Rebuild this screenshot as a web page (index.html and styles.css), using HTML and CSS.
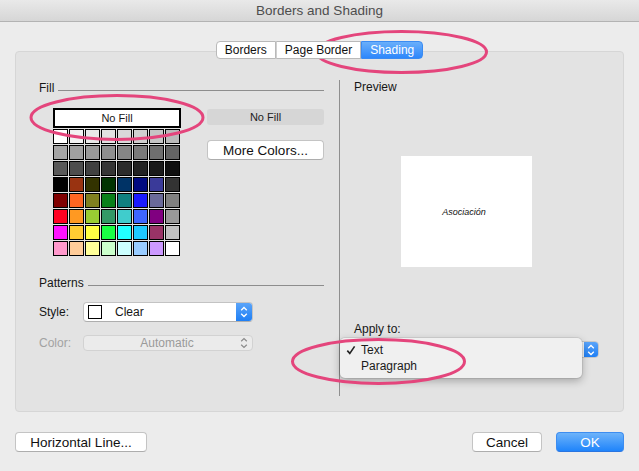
FILE: index.html
```html
<!DOCTYPE html>
<html lang="en">
<head>
    <meta charset="UTF-8">
    <title>Borders and Shading</title>
    <link rel="stylesheet" href="styles.css">
</head>
<body>
    <div class="titlebar">Borders and Shading</div>

    <div class="tabs">
        <span class="tab">Borders</span><span class="tab">Page Border</span><span class="tab active">Shading</span>
    </div>

    <div class="panel">
        <div class="left">
            <div class="group-title"><span>Fill</span><i class="rule"></i></div>

            <div class="fill">
                <div class="palette">
                    <div class="no-fill">No Fill</div>
                    <div class="swatches">
                        <span style="background:#ffffff"></span><span style="background:#f2f2f2"></span><span style="background:#e8e8e8"></span><span style="background:#e1e1e1"></span><span style="background:#d9d9d9"></span><span style="background:#cfcfcf"></span><span style="background:#c5c5c5"></span><span style="background:#bababa"></span>
                        <span style="background:#a5a5a5"></span><span style="background:#a0a0a0"></span><span style="background:#9a9a9a"></span><span style="background:#8f8f8f"></span><span style="background:#858585"></span><span style="background:#7a7a7a"></span><span style="background:#6f6f6f"></span><span style="background:#646464"></span>
                        <span style="background:#595959"></span><span style="background:#4d4d4d"></span><span style="background:#404040"></span><span style="background:#353535"></span><span style="background:#2b2b2b"></span><span style="background:#222222"></span><span style="background:#1a1a1a"></span><span style="background:#0f0f0f"></span>
                        <span style="background:#000000"></span><span style="background:#993311"></span><span style="background:#333300"></span><span style="background:#003300"></span><span style="background:#003366"></span><span style="background:#000a80"></span><span style="background:#3a3a99"></span><span style="background:#333333"></span>
                        <span style="background:#800000"></span><span style="background:#ff6622"></span><span style="background:#808020"></span><span style="background:#0a801a"></span><span style="background:#108080"></span><span style="background:#1a1aff"></span><span style="background:#6a6a99"></span><span style="background:#808080"></span>
                        <span style="background:#ff0022"></span><span style="background:#ff9922"></span><span style="background:#99cc33"></span><span style="background:#339966"></span><span style="background:#40cccc"></span><span style="background:#3d66ff"></span><span style="background:#800080"></span><span style="background:#999999"></span>
                        <span style="background:#ff11ff"></span><span style="background:#ffcc33"></span><span style="background:#ffff44"></span><span style="background:#1aff44"></span><span style="background:#22ffff"></span><span style="background:#1ec8ff"></span><span style="background:#993366"></span><span style="background:#c0c0c0"></span>
                        <span style="background:#ff99cc"></span><span style="background:#ffcc99"></span><span style="background:#ffff99"></span><span style="background:#ccffcc"></span><span style="background:#ccffff"></span><span style="background:#99ccff"></span><span style="background:#cc99ff"></span><span style="background:#ffffff"></span>
                    </div>
                </div>

                <div class="fill-side">
                    <div class="current">No Fill</div>
                    <button class="btn more">More Colors...</button>
                </div>
            </div>

            <div class="group-title patterns"><span>Patterns</span><i class="rule"></i></div>

            <div class="field">
                <label>Style:</label>
                <div class="popup">
                    <span class="pattern-box"></span>
                    <span class="popup-text">Clear</span>
                    <span class="stepper">
                        <svg width="8" height="12" viewBox="0 0 8 12"><path d="M1.2 4.2 L4 1.5 L6.8 4.2 M1.2 7.8 L4 10.5 L6.8 7.8" fill="none" stroke="#fff" stroke-width="1.3"/></svg>
                    </span>
                </div>
            </div>

            <div class="field disabled">
                <label>Color:</label>
                <div class="popup small">
                    <span class="popup-text">Automatic</span>
                    <span class="arrows">
                        <svg width="8" height="12" viewBox="0 0 8 12"><path d="M1.2 4.2 L4 1.5 L6.8 4.2 M1.2 7.8 L4 10.5 L6.8 7.8" fill="none" stroke="#8a8a8a" stroke-width="1.2"/></svg>
                    </span>
                </div>
            </div>
        </div>

        <div class="right">
            <div class="label">Preview</div>
            <div class="preview"><em>Asociación</em></div>

            <div class="label apply-label">Apply to:</div>
            <div class="apply">
                <span class="stepper">
                    <svg width="8" height="12" viewBox="0 0 8 12"><path d="M1.2 4.2 L4 1.5 L6.8 4.2 M1.2 7.8 L4 10.5 L6.8 7.8" fill="none" stroke="#fff" stroke-width="1.3"/></svg>
                </span>
                <div class="menu">
                    <div class="menu-item">
                        <span class="check"><svg width="10" height="10" viewBox="0 0 10 10"><path d="M1.3 5.6 L3.8 8.4 L8.6 1.4" fill="none" stroke="#222" stroke-width="1.6"/></svg></span>
                        Text
                    </div>
                    <div class="menu-item"><span class="check"></span>Paragraph</div>
                </div>
            </div>
        </div>
    </div>

    <div class="footer">
        <button class="btn hline">Horizontal Line...</button>
        <button class="btn cancel">Cancel</button>
        <button class="btn ok">OK</button>
    </div>

    <!-- hand-drawn highlight marks over the screenshot -->
    <svg class="marks" width="639" height="471" viewBox="0 0 639 471">
        <ellipse cx="401.5" cy="52" rx="85" ry="20.5"/>
        <ellipse cx="117" cy="117.5" rx="86" ry="22"/>
        <ellipse cx="378.5" cy="361.5" rx="86" ry="22"/>
    </svg>
</body>
</html>
```

FILE: styles.css
```css
* {
    margin: 0;
    padding: 0;
    box-sizing: border-box;
}

body {
    font-family: "Liberation Sans", Arial, sans-serif;
    font-size: 12px;
    color: #161616;
    background: #ececec;
    width: 639px;
    height: 471px;
    overflow: hidden;
    position: relative;
}

.titlebar {
    height: 22px;
    line-height: 21px;
    text-align: center;
    font-size: 13.5px;
    color: #4d4d4d;
    background: linear-gradient(#e9e9e9, #d6d6d6);
    border-bottom: 1px solid #b3b3b3;
}

.tabs {
    display: flex;
    justify-content: center;
    margin-top: 19px;
    position: relative;
    z-index: 1;
}

.tab {
    height: 18px;
    line-height: 16px;
    padding: 0 8px;
    background: #ffffff;
    color: #111111;
    border: 1px solid #b9b9b9;
    border-left: 1px solid #d0d0d0;
}

.tab:first-child {
    border-left-color: #b9b9b9;
    border-radius: 4px 0 0 4px;
}

.tab:last-child {
    border-radius: 0 4px 4px 0;
}

.tab.active {
    background: linear-gradient(#6aaffa, #2d87fb);
    border-color: #3a8bf2;
    color: #ffffff;
}

.panel {
    display: flex;
    height: 361px;
    margin: -8px 15px 0;
    background: #e3e3e3;
    border: 1px solid #d6d6d6;
    border-radius: 4px;
}

.left {
    width: 323px;
    padding: 28px 15px 0 23px;
}

.group-title {
    display: flex;
    align-items: center;
    height: 16px;
    line-height: 16px;
}

.rule {
    flex: 1;
    height: 1px;
    background: #8d8d8d;
    margin: 4px 0 0 4px;
}

.fill {
    display: flex;
    margin-top: 12px;
    padding-left: 14px;
}

.palette {
    width: 128px;
}

.no-fill {
    height: 20px;
    line-height: 16px;
    border: 2px solid #000000;
    background: #ffffff;
    text-align: center;
    font-size: 11px;
    margin-bottom: 1px;
}

.swatches {
    display: grid;
    grid-template-columns: repeat(8, 15px);
    grid-auto-rows: 15px;
    gap: 1px;
}

.swatches span {
    border: 1px solid #000000;
}

.fill-side {
    width: 117px;
    margin-left: 26px;
    padding-top: 1px;
}

.current {
    height: 16px;
    line-height: 16px;
    background: #d6d6d6;
    border-radius: 3px;
    text-align: center;
    font-size: 11px;
    color: #222222;
}

.btn {
    height: 20px;
    padding: 0 10px;
    font-family: inherit;
    font-size: 13.5px;
    color: #111111;
    background: #ffffff;
    border: 1px solid #c4c4c4;
    border-bottom-color: #adadad;
    border-radius: 4px;
}

.more {
    display: block;
    width: 100%;
    margin-top: 15px;
}

.patterns {
    margin-top: 19px;
}

.field {
    display: flex;
    align-items: center;
    margin-top: 11px;
}

.field label {
    width: 44px;
}

.popup {
    display: flex;
    align-items: center;
    width: 170px;
    height: 20px;
    background: #ffffff;
    border: 1px solid #c3c3c3;
    border-bottom-color: #aeaeae;
    border-radius: 4px;
    overflow: hidden;
}

.pattern-box {
    width: 14px;
    height: 14px;
    border: 1px solid #000000;
    margin-left: 4px;
}

.popup-text {
    margin-left: 13px;
}

.stepper {
    display: flex;
    align-items: center;
    justify-content: center;
    width: 16px;
    height: 100%;
    margin-left: auto;
    background: linear-gradient(#5aa4f9, #1f7ff5);
}

.field.disabled {
    margin-top: 13px;
}

.field.disabled label {
    color: #a2a2a2;
}

.popup.small {
    height: 16px;
    background: #ebebeb;
    border-color: #d2d2d2;
    color: #9a9a9a;
}

.popup.small .popup-text {
    flex: 1;
    text-align: center;
    margin-left: 14px;
}

.arrows {
    display: flex;
    width: 16px;
    justify-content: center;
}

.right {
    flex: 1;
    margin: 28px 0 15px;
    border-left: 1px solid #8f8f8f;
    padding-left: 14px;
}

.label {
    line-height: 14px;
}

.preview {
    display: flex;
    align-items: center;
    justify-content: center;
    width: 131px;
    height: 111px;
    margin: 62px 0 0 47px;
    background: #ffffff;
    font-size: 9px;
    color: #111111;
    padding-right: 5px;
}

.apply-label {
    margin-top: 55px;
}

.apply {
    position: relative;
    display: flex;
    width: 245px;
    height: 17px;
    margin-top: 5px;
    background: #f4f4f4;
    border: 1px solid #c8c8c8;
    border-radius: 4px;
}

.apply .stepper {
    width: 14px;
    border-radius: 0 3px 3px 0;
}

.menu {
    position: absolute;
    left: -15px;
    top: -4px;
    width: 242px;
    height: 40px;
    padding-top: 4px;
    background: #f0f0f0;
    border-radius: 5px;
    box-shadow: 0 3px 8px rgba(0, 0, 0, 0.28), 0 0 0 1px rgba(0, 0, 0, 0.07);
}

.menu-item {
    display: flex;
    align-items: center;
    height: 16px;
    padding-left: 6px;
    color: #1a1a1a;
}

.check {
    display: flex;
    width: 15px;
}

.footer {
    display: flex;
    gap: 14px;
    margin-top: 20px;
    padding: 0 15px;
}

.hline {
    width: 132px;
    margin-right: auto;
}

.cancel {
    width: 70px;
}

.ok {
    width: 68px;
    color: #ffffff;
    background: linear-gradient(#6db3fa, #1f84fb);
    border-color: #3d8df0;
    border-bottom-color: #2a75e0;
}

.marks {
    position: absolute;
    left: 0;
    top: 0;
    pointer-events: none;
}

.marks ellipse {
    fill: none;
    stroke: #e4457c;
    stroke-width: 3;
}
```
